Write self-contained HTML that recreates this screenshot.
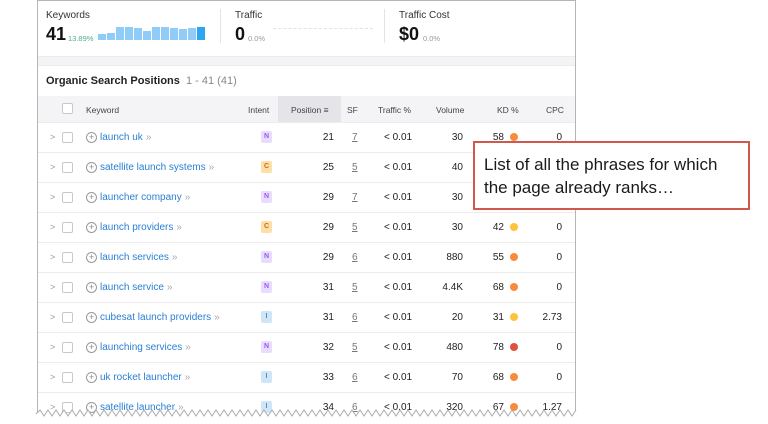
<!DOCTYPE html>
<html><head><meta charset="utf-8"><style>
*{margin:0;padding:0;box-sizing:border-box}
body{width:768px;height:421px;background:#fff;font-family:"Liberation Sans",Arial,sans-serif;position:relative;overflow:hidden;color:#222}
.panel{position:absolute;left:37px;top:0;width:539px;height:414px;border:1.5px solid #b5b5b5;border-bottom:none;background:#fff;overflow:hidden}
.abs{position:absolute}
.lbl{font-size:10px;color:#333}
.big{font-size:18px;font-weight:bold;color:#111}
.sm{font-size:7.5px;color:#999}
.bar{position:absolute;bottom:0;width:8px;background:#8fcdf8}
.row{position:absolute;left:0;width:537px;height:30px;border-top:1px solid #ececec;font-size:10px}
.row span{position:absolute;top:9px}
.chev{left:12px;color:#999;font-size:9px}
.cb{position:absolute;left:24px;top:9px;width:11px;height:11px;border:1px solid #c8c8c8;border-radius:2px;background:#fff}
.plus{position:absolute;left:48px;top:9px;width:11px;height:11px;border:1px solid #999;border-radius:50%;font-size:9px;line-height:9px;text-align:center;color:#888}
.kw{left:62px;color:#2a7fd4}
.kw i{color:#aaa;font-style:normal;margin-left:3px}
.badge{position:absolute;left:223px;top:8px;width:11px;height:12px;border-radius:2px;font-size:7px;font-weight:bold;text-align:center;line-height:12px}
.N{background:#e8dcff;color:#9a5ce8}.C{background:#fde0a8;color:#d36a12}.I{background:#cfe6f9;color:#4a8fce}
.r{text-align:right}
.dot{position:absolute;top:10px;left:472px;width:8px;height:8px;border-radius:50%}
</style></head><body>
<div class="panel">
 <div class="abs lbl" style="left:8px;top:9px">Keywords</div>
 <div class="abs big" style="left:8px;top:23px">41</div>
 <div class="abs sm" style="left:30px;top:33px;color:#4caf8a">13.89%</div>
 <div class="abs" style="left:60px;top:26px;width:108px;height:13px">
  <div class="bar" style="left:0;height:6px"></div><div class="bar" style="left:9px;height:7px"></div><div class="bar" style="left:18px;height:13px"></div><div class="bar" style="left:27px;height:13px"></div><div class="bar" style="left:36px;height:12px"></div><div class="bar" style="left:45px;height:9px"></div><div class="bar" style="left:54px;height:13px"></div><div class="bar" style="left:63px;height:13px"></div><div class="bar" style="left:72px;height:12px"></div><div class="bar" style="left:81px;height:11px"></div><div class="bar" style="left:90px;height:12px"></div><div class="bar" style="left:99px;height:13px;background:#2ba6f3"></div>
 </div>
 <div class="abs" style="left:182px;top:8px;width:1px;height:34px;background:#e4e4e4"></div>
 <div class="abs lbl" style="left:197px;top:9px">Traffic</div>
 <div class="abs big" style="left:197px;top:23px">0</div>
 <div class="abs sm" style="left:210px;top:33px">0.0%</div>
 <div class="abs" style="left:235px;top:27px;width:100px;border-top:1px dashed #e2e2e2"></div>
 <div class="abs" style="left:346px;top:8px;width:1px;height:34px;background:#e4e4e4"></div>
 <div class="abs lbl" style="left:361px;top:9px">Traffic Cost</div>
 <div class="abs big" style="left:361px;top:23px">$0</div>
 <div class="abs sm" style="left:385px;top:33px">0.0%</div>
 <div class="abs" style="left:0;top:55px;width:537px;height:10px;background:#f4f4f6;border-top:1px solid #ececec;border-bottom:1px solid #ececec"></div>
 <div class="abs" style="left:8px;top:74px;font-size:11px;font-weight:bold;color:#222">Organic Search Positions <span style="font-weight:normal;color:#888">&nbsp;1 - 41 (41)</span></div>
 <div class="abs" style="left:0;top:95px;width:537px;height:26px;background:#f4f4f6;font-size:8.5px;color:#444">
  <div class="abs" style="left:240px;top:0;width:63px;height:26px;background:#e5e5e9"></div>
  <div class="cb" style="top:7px"></div>
  <span class="abs" style="left:48px;top:9px">Keyword</span>
  <span class="abs" style="left:210px;top:9px">Intent</span>
  <span class="abs" style="left:253px;top:9px">Position ≡</span>
  <span class="abs" style="left:309px;top:9px">SF</span>
  <span class="abs" style="left:340px;top:9px">Traffic %</span>
  <span class="abs" style="left:398px;top:9px">Volume</span>
  <span class="abs" style="left:459px;top:9px">KD %</span>
  <span class="abs" style="left:508px;top:9px">CPC</span>
 </div>
 <div id="rows"></div>
</div>
<script>
var d=[["launch uk","N",21,7,30,58,"#fa8a3c",0],["satellite launch systems","C",25,5,40,"","",""],["launcher company","N",29,7,30,"","",""],["launch providers","C",29,5,30,42,"#fdc43a",0],["launch services","N",29,6,880,55,"#fa8a3c",0],["launch service","N",31,5,"4.4K",68,"#fa8a3c",0],["cubesat launch providers","I",31,6,20,31,"#fdc43a","2.73"],["launching services","N",32,5,480,78,"#e0503c",0],["uk rocket launcher","I",33,6,70,68,"#fa8a3c",0],["satellite launcher","I",34,6,320,67,"#fa8a3c","1.27"]];
var h="";d.forEach(function(r,i){var t=121+i*30;
h+='<div class="row" style="top:'+t+'px"><span class="chev">&gt;</span><div class="cb"></div><div class="plus">+</div><span class="kw">'+r[0]+'<i>»</i></span><div class="badge '+r[1]+'">'+r[1]+'</div><span class="r" style="left:270px;width:26px">'+r[2]+'</span><span style="left:314px;text-decoration:underline;color:#777">'+r[3]+'</span><span style="left:346px">&lt; 0.01</span><span class="r" style="left:380px;width:45px">'+r[4]+'</span>'+(r[5]!==""?'<span class="r" style="left:440px;width:26px">'+r[5]+'</span><div class="dot" style="background:'+r[6]+'"></div>':'')+'<span class="r" style="left:490px;width:34px">'+r[7]+'</span></div>';});
document.getElementById("rows").innerHTML=h;
</script>
<svg class="abs" style="left:0;top:404px" width="768" height="20"><polygon fill="#fff" points="0,10 36,10 40,6 44,12 48,6 52,12 56,6 60,12 64,6 68,12 72,6 76,12 80,6 84,12 88,6 92,12 96,6 100,12 104,6 108,12 112,6 116,12 120,6 124,12 128,6 132,12 136,6 140,12 144,6 148,12 152,6 156,12 160,6 164,12 168,6 172,12 176,6 180,12 184,6 188,12 192,6 196,12 200,6 204,12 208,6 212,12 216,6 220,12 224,6 228,12 232,6 236,12 240,6 244,12 248,6 252,12 256,6 260,12 264,6 268,12 272,6 276,12 280,6 284,12 288,6 292,12 296,6 300,12 304,6 308,12 312,6 316,12 320,6 324,12 328,6 332,12 336,6 340,12 344,6 348,12 352,6 356,12 360,6 364,12 368,6 372,12 376,6 380,12 384,6 388,12 392,6 396,12 400,6 404,12 408,6 412,12 416,6 420,12 424,6 428,12 432,6 436,12 440,6 444,12 448,6 452,12 456,6 460,12 464,6 468,12 472,6 476,12 480,6 484,12 488,6 492,12 496,6 500,12 504,6 508,12 512,6 516,12 520,6 524,12 528,6 532,12 536,6 540,12 544,6 548,12 552,6 556,12 560,6 564,12 568,6 572,12 576,6 580,10 768,10 768,20 0,20"/><polyline fill="none" stroke="#aaa" stroke-width="1" points="36,10 40,6 44,12 48,6 52,12 56,6 60,12 64,6 68,12 72,6 76,12 80,6 84,12 88,6 92,12 96,6 100,12 104,6 108,12 112,6 116,12 120,6 124,12 128,6 132,12 136,6 140,12 144,6 148,12 152,6 156,12 160,6 164,12 168,6 172,12 176,6 180,12 184,6 188,12 192,6 196,12 200,6 204,12 208,6 212,12 216,6 220,12 224,6 228,12 232,6 236,12 240,6 244,12 248,6 252,12 256,6 260,12 264,6 268,12 272,6 276,12 280,6 284,12 288,6 292,12 296,6 300,12 304,6 308,12 312,6 316,12 320,6 324,12 328,6 332,12 336,6 340,12 344,6 348,12 352,6 356,12 360,6 364,12 368,6 372,12 376,6 380,12 384,6 388,12 392,6 396,12 400,6 404,12 408,6 412,12 416,6 420,12 424,6 428,12 432,6 436,12 440,6 444,12 448,6 452,12 456,6 460,12 464,6 468,12 472,6 476,12 480,6 484,12 488,6 492,12 496,6 500,12 504,6 508,12 512,6 516,12 520,6 524,12 528,6 532,12 536,6 540,12 544,6 548,12 552,6 556,12 560,6 564,12 568,6 572,12 576,6"/></svg>
<div class="abs" style="left:473px;top:141px;width:277px;height:69px;border:2px solid #d0584c;background:#fff;padding:10px 0 0 9px;font-size:17px;line-height:23px;color:#1a1a1a;white-space:nowrap">List of all the phrases for which<br>the page already ranks…</div>
</body></html>
